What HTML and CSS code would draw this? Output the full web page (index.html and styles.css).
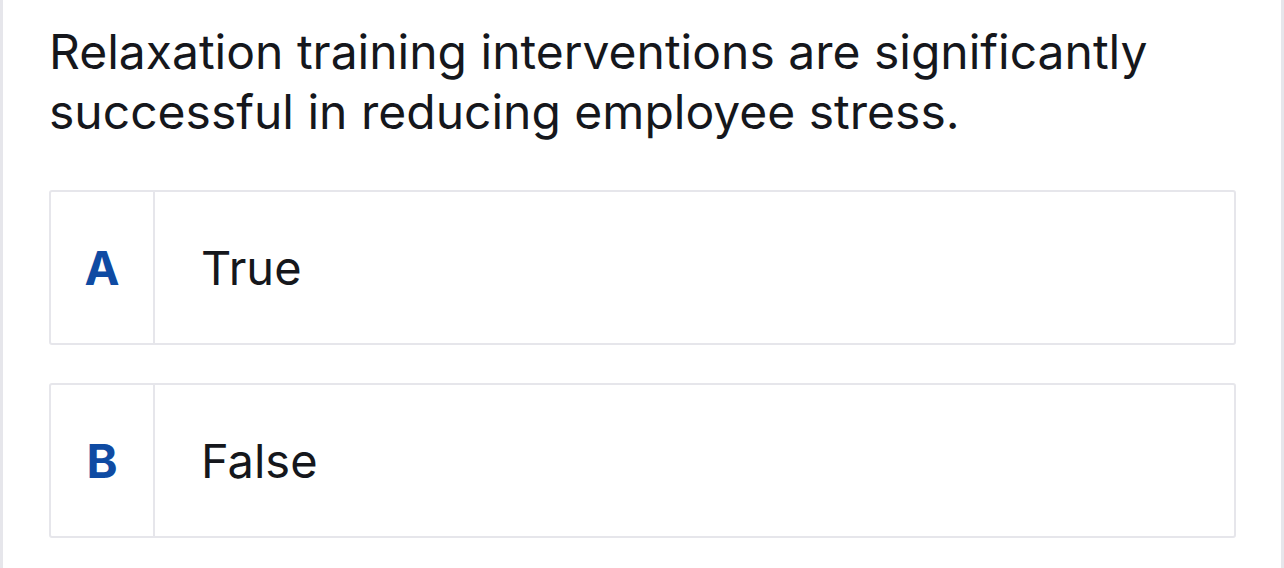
FILE: index.html
```html
<!DOCTYPE html>
<html>
<head>
<meta charset="utf-8">
<link rel="stylesheet" href="styles.css">
</head>
<body>
<div class="frame">
  <div class="content">
    <p class="question">Relaxation training interventions are significantly successful in reducing employee stress.</p>
    <div class="options">
      <div class="option">
        <div class="letter">A</div>
        <div class="label">True</div>
      </div>
      <div class="option">
        <div class="letter">B</div>
        <div class="label">False</div>
      </div>
    </div>
  </div>
</div>
</body>
</html>
```
FILE: styles.css
```css
html, body {
  margin: 0;
  padding: 0;
  background: #ffffff;
}
body {
  font-family: Inter, "Noto Sans", sans-serif;
  color: #15171c;
}
.frame {
  width: 1284px;
  height: 568px;
  box-sizing: border-box;
  border-left: 3px solid #e6e6eb;
  border-right: 3px solid #e6e6eb;
  overflow: hidden;
}
.content {
  padding: 22px 45px 0 46px;
}
.question {
  margin: 0;
  font-size: 48px;
  line-height: 60px;
}
.options {
  margin-top: 48px;
  display: flex;
  flex-direction: column;
  gap: 38px;
}
.option {
  display: flex;
  height: 155px;
  box-sizing: border-box;
  border: 2px solid #e6e6eb;
  border-radius: 3px;
}
.letter {
  width: 102px;
  border-right: 2px solid #e6e6eb;
  display: flex;
  align-items: center;
  justify-content: center;
  font-weight: 700;
  font-size: 47px;
  color: #0f4ba3;
}
.label {
  display: flex;
  align-items: center;
  padding-left: 46px;
  font-size: 47px;
}
```
